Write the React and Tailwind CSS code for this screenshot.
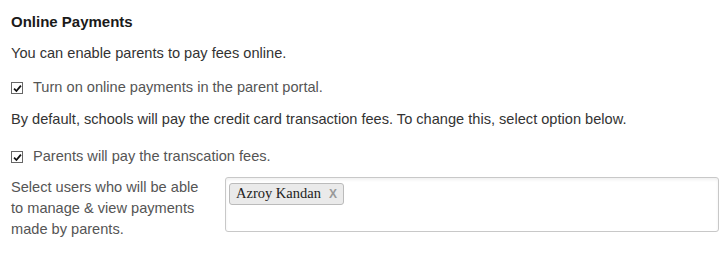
import React from "react";

const Check = ({ label }) => (
  <label className="flex items-center h-5 text-[14.6px] text-[#555]">
    <span className="w-[12px] h-[12px] border border-[#666] bg-white flex items-center justify-center mr-[10px]">
      <svg viewBox="0 0 10 10" className="w-[9px] h-[9px]">
        <path d="M1.2 5.2 L3.8 7.8 L8.8 1.8" fill="none" stroke="#111" strokeWidth="2" />
      </svg>
    </span>
    {label}
  </label>
);

const App = () => {
  return (
    <div className="w-[724px] h-[264px] bg-white pl-[11px] pr-[5px] pt-[12px] font-['Liberation_Sans',Arial,sans-serif]">
      <h3 className="h-5 leading-5 text-[15px] font-bold text-[#1a1a1a]">Online Payments</h3>
      <p className="mt-[11px] leading-5 text-[14.6px] text-[#333]">You can enable parents to pay fees online.</p>
      <div className="mt-[15px]">
        <Check label="Turn on online payments in the parent portal." />
      </div>
      <p className="mt-[11px] leading-5 text-[14.6px] text-[#333]">
        By default, schools will pay the credit card transaction fees. To change this, select option below.
      </p>
      <div className="mt-[18px]">
        <Check label="Parents will pay the transcation fees." />
      </div>
      <div className="mt-[10px] flex">
        <p className="w-[214px] pr-[12px] text-[14.6px] leading-[21px] text-[#555]">
          Select users who will be able to manage &amp; view payments made by parents.
        </p>
        <div className="flex-1 h-[55px] border border-[#c8c8c8] rounded-[3px] shadow-[inset_0_2px_3px_rgba(0,0,0,0.06)] p-[3px]">
          <span className="inline-flex items-center h-[22px] px-[6px] bg-[#eaeaea] border border-[#bbb] rounded-[3px] font-['Liberation_Serif',serif] text-[14.5px] text-[#222]">
            Azroy Kandan
            <span className="ml-[8px] font-['Liberation_Sans',sans-serif] font-bold text-[12px] text-[#999]">X</span>
          </span>
        </div>
      </div>
    </div>
  );
};

export default App;
